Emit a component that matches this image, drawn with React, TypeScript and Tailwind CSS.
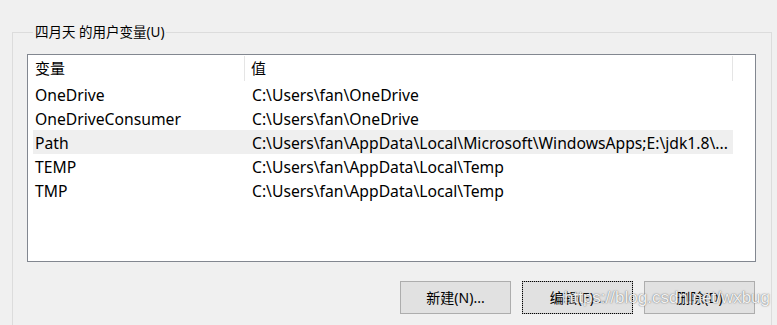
const rows = [
  { name: "OneDrive", value: "C:\\Users\\fan\\OneDrive" },
  { name: "OneDriveConsumer", value: "C:\\Users\\fan\\OneDrive" },
  { name: "Path", value: "C:\\Users\\fan\\AppData\\Local\\Microsoft\\WindowsApps;E:\\jdk1.8\\...", selected: true },
  { name: "TEMP", value: "C:\\Users\\fan\\AppData\\Local\\Temp" },
  { name: "TMP", value: "C:\\Users\\fan\\AppData\\Local\\Temp" },
];

const font = { fontFamily: '"Noto Sans", "Noto Sans CJK SC", sans-serif' };

export default function App() {
  return (
    <div
      className="relative w-[777px] h-[325px] overflow-hidden bg-[#f0f0f0] text-black"
      style={font}
    >
      {/* Group box */}
      <fieldset className="ml-[12px] mr-[5px] mt-[22px] h-[330px] border border-[#dcdcdc] pl-[14px] pr-[15px] pt-[12px]">
        <legend className="ml-[6px] px-[2px] text-[13.5px] leading-[20px]">四月天 的用户变量(U)</legend>

        {/* List view */}
        <div className="h-[208px] w-[729px] border border-[#828790] bg-white">
          <div className="ml-[5px] flex h-[27px] w-[700px] items-center text-[15px]">
            <div className="flex h-[25px] w-[212px] items-center border-r border-[#e5e5e5] pl-[2px]">变量</div>
            <div className="flex h-[25px] flex-1 items-center border-r border-[#e5e5e5] pl-[6px]">值</div>
          </div>
          {rows.map((r) => (
            <div
              key={r.name}
              className={
                "ml-[5px] flex h-[24px] w-[700px] items-center pt-[3px] text-[15.7px] whitespace-nowrap " +
                (r.selected ? "bg-[#efefef]" : "")
              }
            >
              <div className="w-[213px] pl-[2px]">{r.name}</div>
              <div className="flex-1 overflow-hidden pl-[6px]">{r.value}</div>
            </div>
          ))}
        </div>

        {/* Buttons */}
        <div className="mt-[19px] mr-[1px] flex justify-end gap-[11px] text-[14px]">
          <button className="h-[33px] w-[111px] border border-[#adadad] bg-[#e1e1e1]">新建(N)...</button>
          <button className="h-[33px] w-[111px] border border-[#adadad] bg-[#e1e1e1] outline-1 outline-dotted outline-black -outline-offset-1">
            编辑(E)...
          </button>
          <button className="h-[33px] w-[111px] border border-[#adadad] bg-[#e1e1e1]">删除(D)</button>
        </div>
      </fieldset>

      {/* Watermark */}
      <div
        className="absolute left-[564px] top-[285px] text-[17px] text-white/90 [text-shadow:0_0_1px_rgba(90,90,90,0.9),0_0_2px_rgba(120,120,120,0.5)]"
        style={{ fontFamily: '"Liberation Sans", Arial, sans-serif' }}
      >
        https://blog.csdn.net/wxbug
      </div>
    </div>
  );
}
